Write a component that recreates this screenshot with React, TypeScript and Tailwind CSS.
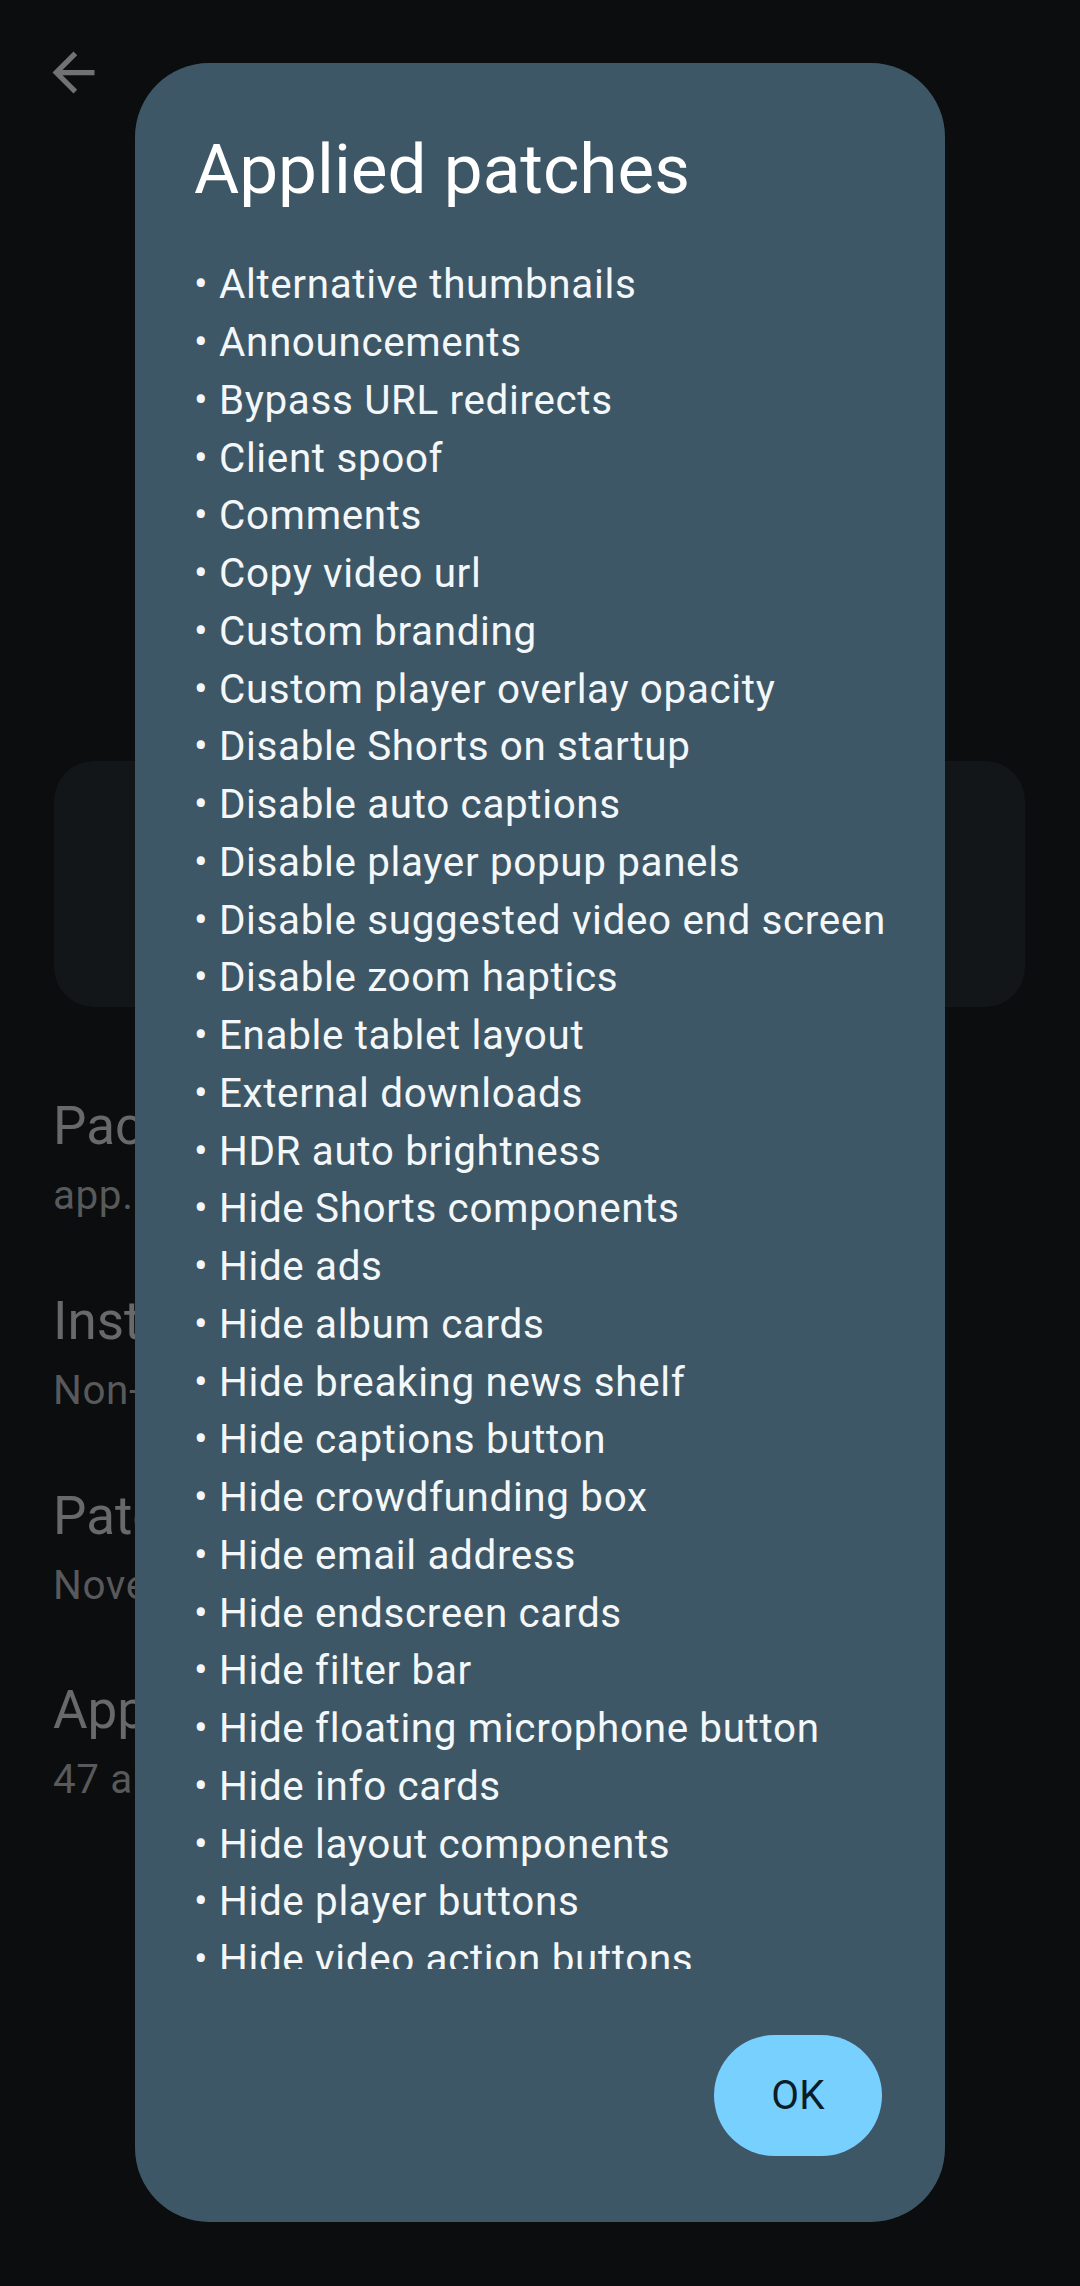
import React from "react";

const patches = [
  "Alternative thumbnails",
  "Announcements",
  "Bypass URL redirects",
  "Client spoof",
  "Comments",
  "Copy video url",
  "Custom branding",
  "Custom player overlay opacity",
  "Disable Shorts on startup",
  "Disable auto captions",
  "Disable player popup panels",
  "Disable suggested video end screen",
  "Disable zoom haptics",
  "Enable tablet layout",
  "External downloads",
  "HDR auto brightness",
  "Hide Shorts components",
  "Hide ads",
  "Hide album cards",
  "Hide breaking news shelf",
  "Hide captions button",
  "Hide crowdfunding box",
  "Hide email address",
  "Hide endscreen cards",
  "Hide filter bar",
  "Hide floating microphone button",
  "Hide info cards",
  "Hide layout components",
  "Hide player buttons",
  "Hide video action buttons",
  "Hide watermark",
  "Minimized playback",
  "Navigation buttons",
  "Open links externally",
  "Playback speed",
  "Remember video quality",
  "Remove player controls background",
  "Remove tracking query parameter",
  "Remove viewer discretion dialog",
  "Restore old seekbar thumbnails",
  "Return YouTube Dislike",
  "Seekbar tapping",
  "Settings",
  "SponsorBlock",
  "Spoof device dimensions",
  "Swipe controls",
  "Wide searchbar",
];

const rows = [
  { title: "Package name", sub: "app.revanced.android.youtube" },
  { title: "Installation type", sub: "Non-root" },
  { title: "Patched at", sub: "November 12, 2024" },
  { title: "Applied patches", sub: "47 applied patches" },
];

export default function App() {
  return (
    <div className="relative w-[1080px] h-[2286px] overflow-hidden bg-[#0b0d0f] font-['Roboto',sans-serif]">
      {/* Background page */}
      <div className="flex flex-col">
        <div className="pl-[42px] pt-[41px]">
          <svg width="63" height="63" viewBox="0 0 24 24" fill="#717273">
            <path d="M20 11H7.83l5.59-5.59L12 4l-8 8 8 8 1.41-1.41L7.83 13H20v-2z" />
          </svg>
        </div>
        <div className="mt-[657px] ml-[54px] mr-[55px] h-[246px] rounded-[40px] bg-[#121618]" />
        <div className="mt-[89px] flex flex-col gap-[66px] pl-[53px]">
          {rows.map((r) => (
            <div key={r.title} className="flex flex-col">
              <div className="text-[53px] leading-[60px] text-[#68696b] whitespace-nowrap">{r.title}</div>
              <div className="mt-[11px] text-[40.4px] leading-[57.75px] tracking-[0.6px] text-[#58595b] whitespace-nowrap">
                {r.sub}
              </div>
            </div>
          ))}
        </div>
      </div>

      {/* Dialog */}
      <div className="absolute left-[135px] top-[63px] w-[810px] h-[2159px] rounded-[74px] bg-[#3e5766] flex flex-col pl-[59px] pr-[63px] pt-[61px] pb-[65px]">
        <div className="text-[69.3px] leading-[92.4px] text-white whitespace-nowrap">Applied patches</div>
        <div className="mt-[40px] mr-[-40px] h-[1713px] overflow-hidden">
          {patches.map((p) => (
            <div
              key={p}
              className="text-[40.4px] leading-[57.75px] tracking-[0.65px] text-[#f4f7f9] whitespace-nowrap"
            >
              {"\u2022 " + p}
            </div>
          ))}
        </div>
        <div className="mt-[66px] flex justify-end">
          <button className="w-[168px] h-[121px] rounded-full bg-[#78d0ff] text-[#0b1d26] text-[40.4px] font-normal tracking-[0.29px] flex items-center justify-center">
            OK
          </button>
        </div>
      </div>
    </div>
  );
}
